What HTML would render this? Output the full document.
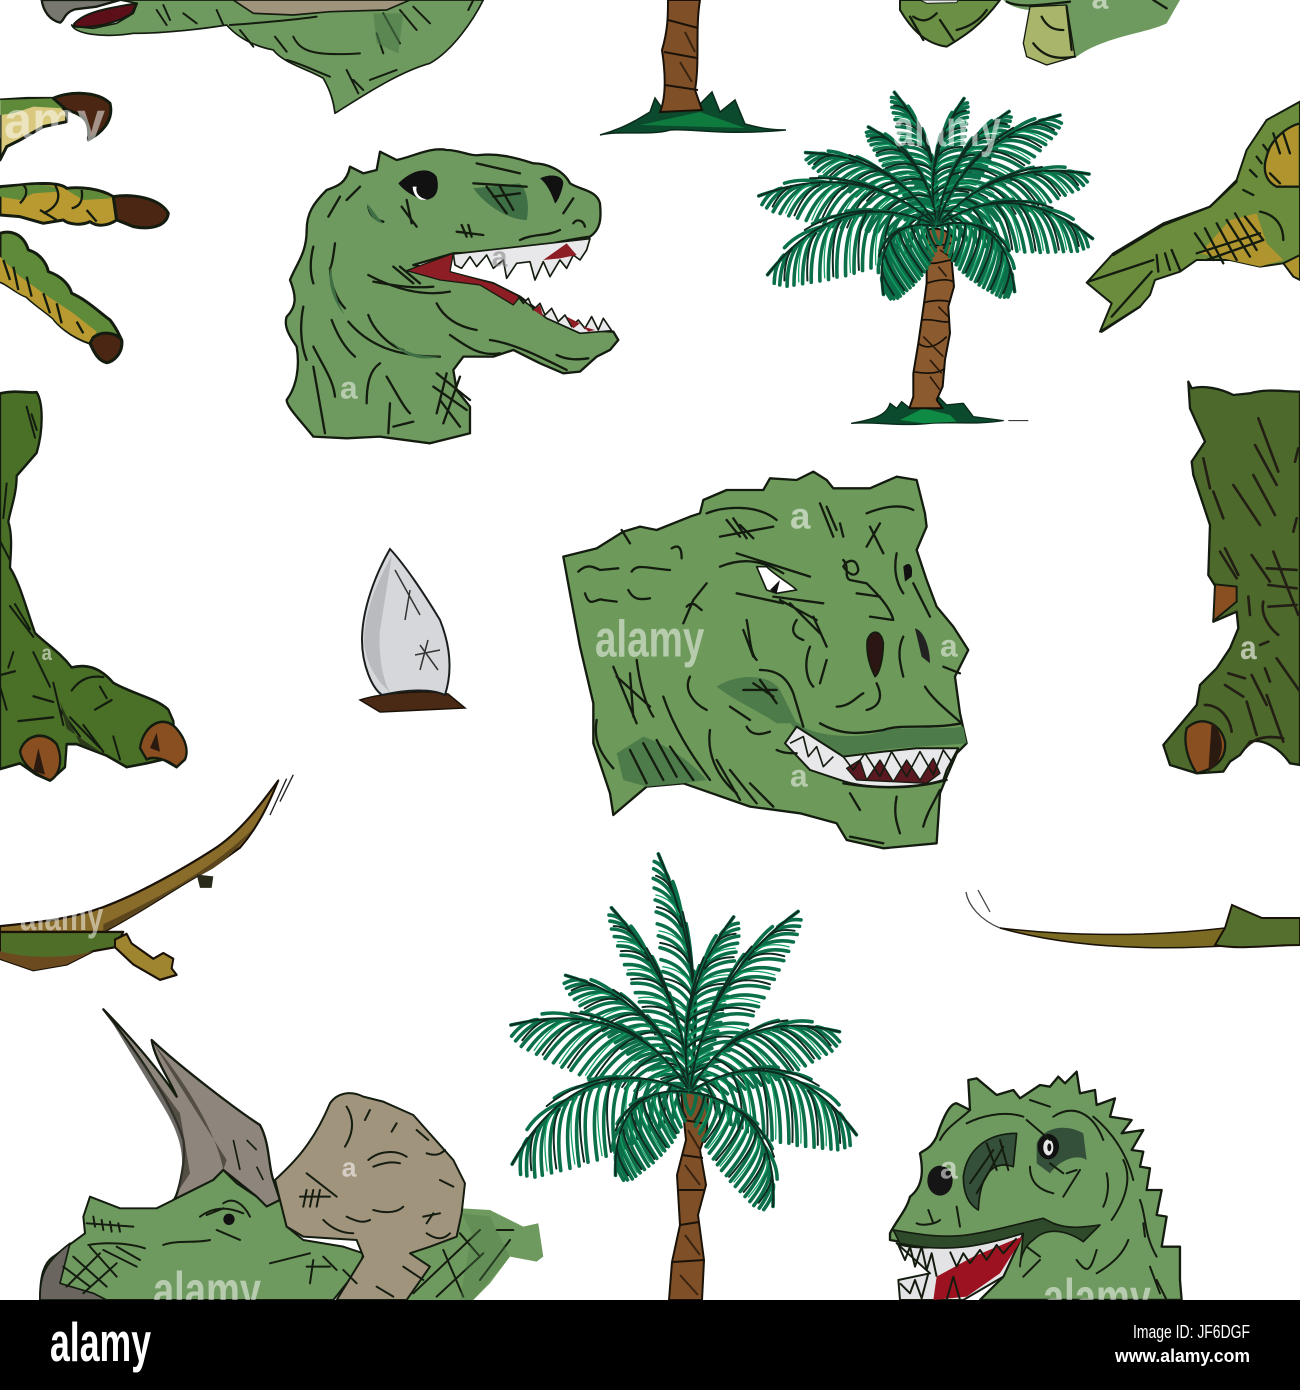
<!DOCTYPE html>
<html><head><meta charset="utf-8"><title>Dinosaur pattern</title>
<style>html,body{margin:0;padding:0;background:#fff}svg{display:block}</style></head>
<body>
<svg xmlns="http://www.w3.org/2000/svg" width="1300" height="1390" viewBox="0 0 1300 1390" font-family="'Liberation Sans',sans-serif">
<defs>
<g id="f" fill="none" stroke-linecap="round">
<path vector-effect="non-scaling-stroke" stroke="#0b7049" stroke-width="3.6" d="M0 0C30-28 65-28 100 18M4-3Q10 5 12 14M9-7Q17 3 20 18M14-10Q23 2 26 20M19-13Q28 0 31 22M24-15Q33-2 36 24M29-17Q38-4 41 26M34-18Q43-5 46 27M39-19Q48-6 51 28M44-19Q53-7 56 29M49-19Q58-7 61 29M54-17Q63-5 66 30M59-15Q68-4 71 30M64-13Q73-2 76 30M69-10Q78 0 81 30M74-8Q83 2 86 30M79-4Q87 5 90 30M84 0Q91 7 94 28M89 4Q95 10 97 26M20-14Q35-24 50-24M40-19Q58-24 70-18M60-15Q78-14 88-2"/>
<path vector-effect="non-scaling-stroke" stroke="#0f2a20" stroke-width="2" d="M0 0C30-30 65-30 100 18M9-7Q15 3 17 16M24-15Q31-2 33 22M39-19Q46-6 48 26M54-17Q61-5 63 28M69-10Q76 0 78 28M84 0Q89 7 91 25M35-21Q55-26 75-14"/>
<path vector-effect="non-scaling-stroke" stroke="#12a064" stroke-width="1.3" d="M14-10Q21 2 24 18M29-17Q36-4 38 24M44-19Q51-7 53 27M59-15Q66-4 68 28M74-8Q81 2 83 28"/>
</g>
<g id="wm"><text font-size="52" font-weight="700" fill="#fff" opacity=".5" textLength="108" lengthAdjust="spacingAndGlyphs">alamy</text></g>
</defs>
<rect width="1300" height="1390" fill="#fff"/>

<!-- top-left dino, claws -->
<g transform="scale(.3333)" stroke-linejoin="round">
<path d="M125 0C130 35 150 60 180 68C195 60 190 40 225 28L290 20L360 0Z" fill="#77766f" stroke="#141c10" stroke-width="7"/>
<path d="M360 0L412 10L400 40L350 70L280 85L225 80L215 75C225 100 300 115 400 100C500 100 620 85 680 75C720 120 770 140 820 150C850 190 930 210 970 235C990 270 1000 300 1005 340C1100 280 1200 215 1290 190C1360 150 1420 60 1450 0Z" fill="#6f9a5f" stroke="#141c10" stroke-width="5"/>
<path d="M222 72C250 40 300 28 410 10L395 40C350 70 280 85 225 80Z" fill="#5c0f18" stroke="#141c10" stroke-width="6"/>
<path d="M700 0L760 40L880 45L990 35L1160 30L1230 0Z" fill="#a0947d" stroke="#141c10" stroke-width="5"/>
<g fill="none" stroke="#141c10" stroke-width="6" stroke-linecap="round">
<path d="M470 30L500 75M490 15L510 60M550 40L590 70M650 30L670 75M690 75C760 70 880 60 950 50M720 90L760 140M825 110L860 155M880 110C900 150 930 170 1080 160M860 180C900 190 940 210 990 230M1040 210L1075 280M1060 240L1090 270M1130 100L1150 160M1200 30L1250 90M1240 20L1290 70M1150 40L1200 130M1110 240L1190 210M1420 0L1405 30"/>
</g>
<path d="M1120 40L1210 40L1195 160L1130 130Z" fill="#4d7c4a" opacity=".6"/>
<!-- finger 1 -->
<path d="M0 300L80 295L160 295L200 335L200 365L130 380L60 420L20 440L0 480Z" fill="#d8c97e" stroke="#141c10" stroke-width="9"/>
<path d="M0 300L160 295L190 325L100 320L40 340L0 345Z" fill="#5f8a3a"/>
<path d="M160 295C200 275 290 270 330 310C340 350 320 390 265 420C270 370 260 345 200 330Z" fill="#4a2613" stroke="#141c10" stroke-width="9"/>
<!-- finger 2 -->
<path d="M0 560L60 555C100 550 180 545 200 565C240 560 300 565 340 590L350 660C320 680 290 680 270 665C240 680 200 670 190 660L130 670L60 650L0 645Z" fill="#b89a30" stroke="#141c10" stroke-width="9"/>
<path d="M0 565L60 558C100 553 170 550 175 575L100 580L60 600L0 590ZM200 570C240 565 300 570 335 595L250 600Z" fill="#5f8a3a"/>
<path d="M340 590C400 580 480 595 505 640C500 680 450 690 400 680L350 660Z" fill="#4a2613" stroke="#141c10" stroke-width="9"/>
<path d="M70 555C85 570 80 590 60 610M165 555C185 590 175 620 130 640M245 570C250 600 240 620 215 625M120 630L170 660M260 630L290 665" fill="none" stroke="#141c10" stroke-width="7"/>
<!-- finger 3 -->
<path d="M0 700C30 690 70 700 85 750C120 760 140 790 145 815C190 830 210 860 215 880C260 900 290 930 330 960C350 985 355 1000 365 1020C370 1060 340 1085 320 1088C290 1080 280 1050 270 1030C210 1010 170 970 160 955C130 930 100 910 80 890C50 880 20 850 0 845Z" fill="#5f8a3a" stroke="#141c10" stroke-width="9"/>
<path d="M0 770L60 830L130 880L220 940L290 995L275 1030C210 1010 170 970 160 955C130 930 100 910 80 890C50 880 20 850 0 845Z" fill="#b89a30"/>
<path d="M10 780L30 840M40 800L55 870M80 830L95 890M130 880L150 940M170 910L185 970M230 965L250 1000" stroke="#141c10" stroke-width="7"/>
<path d="M280 1012C310 990 350 1000 365 1020C370 1060 340 1085 320 1088C290 1080 280 1050 270 1030Z" fill="#4a2613" stroke="#141c10" stroke-width="9"/>
</g>
<text x="-38" y="138" font-size="52" font-weight="700" fill="#fff" opacity=".5" textLength="143" lengthAdjust="spacingAndGlyphs">alamy</text>

<!-- left foot + pterosaur -->
<g transform="translate(0 380) scale(.3333 .3833)" stroke-linejoin="round">
<path d="M0 35C50 25 80 35 110 32C130 60 130 130 110 190L50 250C50 300 30 340 25 370C40 410 30 470 30 490C60 530 80 600 105 660C140 690 180 710 215 750C260 740 300 750 340 790C400 820 470 830 505 860L520 890L530 1010L490 990L440 1000L380 1010L320 980L230 950L200 950L195 1010L150 1045L110 1030L60 1000L0 1015Z" fill="#4a7028" stroke="#141c10" stroke-width="7"/>
<path d="M60 970C70 930 130 910 170 950C190 990 180 1030 150 1045C110 1030 70 1010 60 970Z" fill="#8a4f20" stroke="#141c10" stroke-width="7"/>
<path d="M100 1020L115 960L135 1030Z" fill="#2b1a10"/>
<path d="M420 960C430 900 490 870 530 910C560 940 565 970 555 990L530 1010C500 990 460 980 440 990Z" fill="#8a4f20" stroke="#141c10" stroke-width="7"/>
<path d="M450 960L470 920L480 970Z" fill="#2b1a10"/>
<g fill="none" stroke="#141c10" stroke-width="6" stroke-linecap="round">
<path d="M80 70L105 150M95 90L110 130M20 270L10 360M0 420L30 470M30 590L100 670M45 585L90 650M100 710L150 800M100 825L160 840M160 790L190 900M180 860L240 930M210 880L300 960M250 900L310 970M340 930L360 990M215 810C240 780 270 770 310 775M285 860L335 835M300 800L320 830M55 890L160 880M0 770L45 760M40 710L25 750M0 800L20 860"/>
</g>
<path d="M180 840L200 910L310 975L240 950Z" fill="#2a3a1a"/>
<text x="125" y="730" font-size="55" font-weight="700" fill="#fff" opacity=".55">a</text>
<!-- pterosaur -->
<path d="M0 1425C100 1415 200 1410 310 1375C420 1340 560 1270 640 1225C720 1180 780 1110 835 1045C800 1120 770 1170 720 1220L640 1270L590 1295C500 1340 420 1390 310 1440L0 1445Z" fill="#8a6c2a" stroke="#1a1208" stroke-width="6"/>
<path d="M310 1420C450 1360 620 1290 760 1170C700 1240 640 1280 590 1295C500 1340 420 1390 310 1440Z" fill="#5b451c"/>
<path d="M590 1290L640 1295L635 1325L600 1325Z" fill="#2a2a1a"/>
<path d="M0 1440L250 1440L370 1440L345 1480L280 1490L200 1525L100 1540L0 1510Z" fill="#4f6f28" stroke="#1a1208" stroke-width="6"/>
<path d="M0 1490C80 1510 200 1510 280 1490L200 1525L100 1540L0 1510Z" fill="#6b4a20"/>
<path d="M345 1460L380 1445L395 1470L460 1510L490 1495L520 1510L515 1535L530 1552L480 1565L400 1525L345 1480Z" fill="#a08530" stroke="#1a1208" stroke-width="6"/>
<path d="M810 1135L860 1040M840 1100L880 1030" stroke="#222" stroke-width="4" fill="none"/>
<text x="60" y="1435" font-size="105" font-weight="700" fill="#fff" opacity=".5" textLength="250" lengthAdjust="spacingAndGlyphs">alamy</text>
</g>

<!-- right foot -->
<g transform="translate(1150 375) scale(.3333)" stroke-linejoin="round">
<path d="M115 20L125 40C160 30 210 40 250 60L300 55C350 40 400 50 450 50V1170L420 1165C390 1120 340 1090 300 1100L270 1140L240 1160L220 1190L140 1195L60 1170L40 1110L140 990L150 930L200 880L240 820L265 760L260 710L190 740L200 640L175 600L180 450L130 300L125 260L165 200L120 100Z" fill="#4d6a2c" stroke="#141c10" stroke-width="7"/>
<path d="M195 628L260 635L260 680L190 738Z" fill="#8a4f20" stroke="#141c10" stroke-width="6"/>
<path d="M110 1060C150 1020 210 1040 225 1100C230 1150 200 1180 140 1195C110 1150 100 1100 110 1060Z" fill="#8a4f20" stroke="#141c10" stroke-width="7"/>
<path d="M185 1040C225 1080 230 1150 175 1190Z" fill="#2b1a10"/>
<g fill="none" stroke="#231f14" stroke-width="8" stroke-linecap="round">
<path d="M325 130L385 290M315 210L380 330M310 300L375 420M250 330L330 450M160 250L180 340M190 350L220 430M210 530L260 610M225 520L265 600M305 540L360 620M370 530L445 720M340 680C330 720 360 760 385 780M350 580L440 585M355 630L440 640M355 695L440 690M295 665L300 720M330 810L355 800M380 850L450 950M305 900L350 990M290 980L320 1080M350 960L400 1100M235 895L285 910M225 930L280 965M345 880L360 920M165 990C210 990 240 1030 245 1070M285 1120C310 1090 350 1080 400 1090M445 220L435 260M440 430L430 470"/>
</g>
<text x="270" y="852" font-size="100" font-weight="700" fill="#fff" opacity=".6" textLength="50" lengthAdjust="spacingAndGlyphs">a</text>
</g>

<!-- right top olive dino -->
<g transform="translate(1080 90) scale(.3333)" stroke-linejoin="round">
<path d="M20 578L100 490L250 400L390 350L470 270L500 180L560 90L660 35V530L610 520L540 530L450 510L350 510L300 545L225 570L210 615L180 650L60 725L95 640Z" fill="#6a8c3c" stroke="#141c10" stroke-width="6"/>
<path d="M560 200C570 150 620 110 660 100V290L590 290C550 270 550 230 560 200Z" fill="#b0952f" stroke="#141c10" stroke-width="7"/>
<path d="M360 490L450 390L530 370L560 460L610 510L540 530L450 510Z" fill="#b0952f"/>
<path d="M610 520L660 495V570L640 560Z" fill="#b0952f" stroke="#141c10" stroke-width="6"/>
<g fill="none" stroke="#141c10" stroke-width="7" stroke-linecap="round">
<path d="M100 495L250 405L390 350L470 275M25 575L220 510M95 680L215 545M65 725L180 650M345 430L400 510M375 415L430 520M410 400L470 510M440 390L510 500M465 370L530 480M495 380L550 450M350 490L540 430M380 510L550 450M230 495L235 545M255 490L270 540M275 480L300 540M540 365C590 375 610 410 610 450M510 240L530 260M530 200L545 220M550 165L565 185M490 300L520 315M580 130L600 190M610 130L630 190M570 250L600 280"/>
</g>
</g>

<!-- top-right partial -->
<g transform="translate(890 0) scale(.3333)" stroke-linejoin="round">
<path d="M30 0L30 30C60 80 100 130 170 140C220 110 270 80 330 0Z" fill="#6a8f45" stroke="#141c10" stroke-width="6"/>
<path d="M90 0L110 10L200 8L205 0Z" fill="#e8e8e8" stroke="#141c10" stroke-width="3"/>
<path d="M340 0C360 20 400 30 420 30L400 130L410 170L470 195L560 170C640 110 770 100 830 70L870 0Z" fill="#6f9a5f"/>
<path d="M420 20L530 15L555 170L470 195L410 170L400 130Z" fill="#a9b56b" stroke="#141c10" stroke-width="4"/>
<g fill="none" stroke="#141c10" stroke-width="7" stroke-linecap="round">
<path d="M70 50C100 70 120 60 140 40M60 50L100 120M150 60L190 120M200 90C240 80 270 60 290 30M455 50C470 80 490 90 520 90M430 130C460 170 500 180 555 170M530 20L545 150M350 5C390 25 450 15 540 5M790 0L830 25"/>
</g>
<text x="605" y="25" font-size="90" font-weight="700" fill="#fff" opacity=".55">a</text>
</g>

<!-- top palm -->
<path d="M600 135C625 128 640 118 650 112L655 98L662 108L700 104L712 92L720 112L735 100L745 124C760 128 770 130 786 130C720 136 690 128 670 130C650 136 620 130 600 135Z" fill="#0b4a2c" stroke="#0b2a1b" stroke-width="1.5"/>
<path d="M640 125L700 112L745 128Z" fill="#0e7a3e"/>
<path d="M668 0H700C695 30 700 60 695 90L702 110L660 112C667 95 665 70 662 50C668 30 668 15 668 0Z" fill="#7f5028" stroke="#1a1208" stroke-width="2"/>
<path d="M668 20L698 28M664 52L697 58M665 85L698 90" stroke="#1a1208" stroke-width="2"/>
<path d="M685 32L695 52M680 62L692 82" stroke="#3a2410" stroke-width="2"/>

<!-- palm 1 -->
<g transform="translate(750 80) scale(.3333)" stroke-linejoin="round">
<path d="M305 1030C360 1020 410 1010 420 970L440 985L455 965L480 985L560 945L590 975L640 970L670 1010L760 1022C680 1035 600 1025 540 1030C450 1040 380 1025 305 1030Z" fill="#0b4a2c" stroke="#0b2a1b" stroke-width="4"/>
<path d="M775 1022H835" stroke="#222" stroke-width="3"/>
<path d="M450 1020L520 985L600 1005L620 1025L520 1030Z" fill="#0e8a45"/>
<path d="M530 450C560 440 600 450 612 480L605 540L612 620L595 680L600 760L585 840L578 920L560 960L578 985L478 985L490 950L490 880L505 790L515 720L522 670L530 610L530 550Z" fill="#8b5a2f" stroke="#141008" stroke-width="6"/>
<path d="M535 495C570 500 600 490 612 488M530 548C560 555 590 540 605 540M530 610C560 600 590 595 610 605M522 668C550 660 580 660 597 665M515 720C550 715 575 730 600 725M505 790C530 810 560 800 590 770M490 875C520 880 560 885 585 865" fill="none" stroke="#141008" stroke-width="5"/>
<path d="M570 510L600 530M565 560L590 590M565 680L595 710M520 770L560 810M540 790L580 830M540 840L575 880M540 890L570 930" fill="none" stroke="#2a1a0c" stroke-width="5"/>
</g>
<g transform="translate(937 226)">
<use href="#f" transform="rotate(76) scale(-1.4 .5)"/>
<use href="#f" transform="rotate(-82) scale(1.3 .5)"/>
<use href="#f" transform="rotate(60) scale(-1.2 .55)"/>
<use href="#f" transform="rotate(-62) scale(1.35 .55)"/>
<use href="#f" transform="rotate(34) scale(-1.5 .7)"/>
<use href="#f" transform="rotate(15) scale(-1.8 .95)"/>
<use href="#f" transform="rotate(-9) scale(-1.75 1.2)"/>
<use href="#f" transform="rotate(-40) scale(-.85 1)"/>
<use href="#f" transform="rotate(-47) scale(1.65 .8)"/>
<use href="#f" transform="rotate(-24) scale(1.6 .8)"/>
<use href="#f" transform="rotate(-2) scale(1.55 1)"/>
<use href="#f" transform="rotate(30) scale(1 1)"/>
</g>
<text x="893" y="146" font-size="52" font-weight="700" fill="#fff" opacity=".55" textLength="108" lengthAdjust="spacingAndGlyphs">alamy</text>

<!-- palm 2 -->
<path d="M681 1092L708 1095L707 1130L700 1150L706 1185L698 1215L704 1260L702 1300H669L672 1262L680 1225L677 1175L686 1140Z" fill="#7f5028" stroke="#1a1208" stroke-width="2"/>
<path d="M684 1120L707 1124M682 1155L703 1158M678 1190L705 1190M680 1225L699 1222M673 1262L704 1260" stroke="#1a1208" stroke-width="2"/>
<path d="M688 1130L700 1150M685 1165L700 1185M685 1235L700 1255M680 1275L698 1295" stroke="#3a2410" stroke-width="2"/>
<g transform="translate(690 1092)">
<use href="#f" transform="rotate(85) scale(-2.4 .6)"/>
<use href="#f" transform="rotate(70) scale(-2 .6)"/>
<use href="#f" transform="rotate(-80) scale(1.8 .7)"/>
<use href="#f" transform="rotate(48) scale(-1.7 .8)"/>
<use href="#f" transform="rotate(27) scale(-1.9 1.2)"/>
<use href="#f" transform="rotate(-14) scale(-1.9 1.5)"/>
<use href="#f" transform="rotate(-38) scale(-1.1 1.1)"/>
<use href="#f" transform="rotate(-63) scale(2.1 .8)"/>
<use href="#f" transform="rotate(-29) scale(1.6 1.1)"/>
<use href="#f" transform="rotate(6) scale(1.7 1.4)"/>
<use href="#f" transform="rotate(46) scale(1.4 1.1)"/>
</g>

<!-- rex 1 -->
<g transform="translate(280 140) scale(.3333)" stroke-linejoin="round">
<path d="M100 890C60 840 20 800 20 780C50 740 60 680 50 620C30 590 10 560 20 530C50 500 50 470 30 420C50 370 80 340 80 270C80 220 100 190 140 150C170 140 200 130 210 80L250 100L290 90L300 35L350 60C400 50 450 20 500 30C540 30 570 50 600 45C650 40 700 50 760 70C800 70 850 90 870 130C900 150 950 150 960 190C965 240 960 270 930 290C850 300 780 320 700 335L520 340L400 375L520 400L640 430L720 470L800 530L900 570L1000 575L1015 600L990 630L950 650L900 695L850 700L780 670L700 630L640 650L550 650L520 690L530 750L570 800L570 880L530 890L450 910L300 890L200 895Z" fill="#6f9a5f" stroke="#141c10" stroke-width="7"/>
<path d="M380 392L520 340L510 395L640 430L720 470L700 495L600 435L480 420Z" fill="#8e1e26" stroke="#141c10" stroke-width="4"/>
<path d="M520 342L930 296L920 330L900 360L880 345L860 385L840 360L810 410L790 365L765 420L750 365L710 370L680 415L670 360L640 385L620 345L590 380L570 350L545 385L525 375Z" fill="#e8e8ea" stroke="#141c10" stroke-width="5"/>
<path d="M790 360L860 310L890 345L840 355Z" fill="#8e1e26"/>
<path d="M715 470L730 490L745 475L760 510L780 490L795 525L815 505L835 545L855 525L875 560L895 540L915 565L935 530L955 570L970 535L995 572L900 580L800 535Z" fill="#e8e8ea" stroke="#141c10" stroke-width="5"/>
<path d="M760 510L790 530L780 495ZM860 530L880 565L900 550ZM910 560L925 575L945 570Z" fill="#8e1e26"/>
<path d="M355 130C400 85 450 80 470 110C480 150 470 180 430 180C400 170 370 150 355 130Z" fill="#111"/>
<path d="M398 140C400 170 420 185 440 178C420 175 405 160 410 140Z" fill="#fff"/>
<path d="M580 145L720 130C750 160 745 220 740 240C690 240 620 200 580 145Z" fill="#3f6f45"/>
<path d="M780 115C810 100 850 105 850 130C845 160 830 190 825 190C815 160 800 130 780 115Z" fill="#111"/>
<g fill="none" stroke="#141c10" stroke-width="7" stroke-linecap="round">
<path d="M590 70L720 100M580 130L740 140M620 140L680 220M660 140L700 210M640 170L720 160"/>
<path d="M265 405C350 450 430 470 510 455M280 425C360 440 400 445 460 440"/>
<path d="M470 490C490 530 530 560 590 570M510 585C560 620 600 650 660 640M630 600C700 610 780 650 860 690"/>
<path d="M830 645C860 660 890 660 925 655M205 545C260 610 340 650 480 650M265 525C280 570 330 620 370 630"/>
<path d="M150 385C150 430 170 480 195 505M155 540C170 580 190 620 225 650"/>
<path d="M100 620C130 680 160 720 165 770M100 680L135 880M70 500C60 550 60 610 80 660"/>
<path d="M470 700L570 780M460 740L560 810M480 780L540 860M500 700L470 820M540 710L490 850"/>
<path d="M320 710C350 760 370 800 390 820M340 860L400 845M330 790L325 880"/>
<path d="M260 790C260 730 270 690 300 670M265 200C270 230 290 240 310 245M365 200L410 260M380 180L395 250"/>
<path d="M545 255L560 290M565 255L575 290M530 275L610 285M180 170L145 230M240 140L200 180"/>
<path d="M880 250C890 235 910 240 915 260M850 220L880 175M720 300C760 280 800 290 840 270"/>
<path d="M100 320C90 360 90 400 100 430M165 310C160 350 155 380 150 385M340 380L400 430M360 380L420 430"/>
</g>
<path d="M150 380C140 440 170 500 195 525C170 490 160 430 150 380ZM330 600C370 640 430 650 480 650C420 665 370 650 330 600ZM260 190C270 240 300 250 310 250C290 230 280 210 260 190Z" fill="#3f6f45"/>
<text x="180" y="775" font-size="95" font-weight="700" fill="#fff" opacity=".5">a</text>
<text x="635" y="380" font-size="85" font-weight="700" fill="#888" opacity=".6">a</text>
</g>

<!-- rex 2 -->
<g transform="translate(550 460) scale(.3333)" stroke-linejoin="round">
<path d="M40 290L140 265L220 215L270 200L320 210L420 170L450 160L460 120L530 90L640 90L660 55L740 60L790 35L830 60L850 85L960 85L1040 50L1100 60L1125 160L1130 200L1100 270L1130 360L1160 440L1210 500L1255 570L1215 650L1230 760L1250 850L1220 880L1190 950L1170 1000L1160 1150L1000 1165L890 1140L860 1090L750 1060L600 1040L400 970L290 980L190 1065L180 1000L130 850L130 730L90 560L60 400Z" fill="#6d9a5a" stroke="#141c10" stroke-width="7"/>
<path d="M200 880L280 830C340 850 420 900 470 960L400 970L290 980L220 960ZM760 800C800 830 950 840 1000 810C1080 800 1180 810 1240 800L1250 850C1150 860 1000 860 880 890L780 870L700 760Z" fill="#4d7c4a"/>
<path d="M500 680C560 640 660 640 690 690L740 790L680 790C620 750 550 720 500 680Z" fill="#4d7c4a"/>
<path d="M705 850L740 800L880 890L1000 875L1100 865L1225 865L1190 930L1180 960C1100 985 950 990 870 960L780 930Z" fill="#e8e8ea" stroke="#141c10" stroke-width="6"/>
<path d="M890 925L930 900L950 960L990 900L1030 965L1070 900L1110 960L1150 895L1170 940L1130 970L920 960Z" fill="#5a1820" stroke="#141c10" stroke-width="4"/>
<path d="M720 850L760 830L775 890L800 860L820 920L850 890M880 890L910 930L945 880L990 950L1025 875L1070 950L1110 875L1150 945L1180 870L1205 905" fill="none" stroke="#141c10" stroke-width="5"/>
<path d="M620 320L650 320C680 350 720 370 740 390L680 400L650 390Z" fill="#fff" stroke="#141c10" stroke-width="5"/>
<path d="M660 390L690 360L680 400Z" fill="#111"/>
<path d="M952 540C965 505 995 510 1000 550C1000 590 990 640 975 650C960 620 948 580 952 540Z" fill="#2b1614" stroke="#141c10" stroke-width="5"/>
<path d="M1095 505C1120 510 1140 560 1140 610L1115 590Z" fill="#222"/>
<path d="M1060 320C1080 300 1090 320 1085 350L1065 365Z" fill="#111"/>
<g fill="none" stroke="#141c10" stroke-width="7" stroke-linecap="round">
<path d="M85 335C110 310 130 320 150 330L205 325M245 335C260 310 290 325 360 330M105 400C120 450 140 410 160 420L200 425M235 390C250 420 270 420 300 415"/>
<path d="M215 210L240 250M365 265C390 250 395 270 395 295"/>
<path d="M470 160C520 140 620 130 680 180M530 180L570 230M550 175L590 235M570 195L610 235M510 230L670 200"/>
<path d="M810 130L850 230M830 140L860 210M870 190L880 230M950 160C1000 140 1050 130 1090 150M960 200L1000 280M990 190L950 260"/>
<path d="M510 320C560 300 620 290 700 340M560 280L780 350M560 400L700 430M670 410L820 430"/>
<path d="M690 420L800 480M720 430L810 520M740 480C720 510 730 530 760 540M790 470L830 560M780 560C760 610 770 660 790 680M830 600L810 670"/>
<path d="M880 300C900 320 880 350 900 360L950 370C980 400 1020 440 1030 480L960 470"/>
<path d="M590 480C600 530 600 580 620 600M580 510L610 590"/>
<path d="M420 650C400 690 430 730 470 750M410 440C430 420 440 440 455 450M400 490L430 420L470 370"/>
<path d="M190 620L260 790M200 650L300 740M260 600C270 680 290 740 310 770M240 640L250 770"/>
<path d="M340 710C370 800 420 880 480 960M480 810C470 880 500 950 560 1000M140 780C130 840 150 880 190 925"/>
<path d="M240 870L290 970M280 850L340 960M320 840L380 950M360 860L430 960M500 900L570 1020M540 930L620 1030M600 970L670 1040"/>
<path d="M630 630C680 630 710 650 730 700L760 800M590 800C600 820 620 830 660 815M680 870C700 880 720 880 740 880"/>
<path d="M860 740C900 740 920 710 940 700M950 750C990 740 1000 710 980 670M810 790C880 830 940 820 1000 810C1060 790 1130 810 1235 790"/>
<path d="M1125 680C1150 720 1190 750 1235 790M1180 620L1230 640M1060 530C1040 570 1050 610 1060 650"/>
<path d="M900 1000L930 1050M1040 1010C1030 1060 1040 1090 1050 1120M1170 990C1150 1030 1130 1060 1120 1100M900 1130L1000 1150M880 970C1000 990 1100 985 1190 960"/>
<path d="M1040 280C1030 330 1040 370 1060 400M1090 370L1140 470M880 320C890 300 920 290 925 330C920 350 900 350 880 320M920 400L990 410"/>
<path d="M610 670L670 710M630 660L680 730M580 690L680 690M540 740L600 780"/>
</g>
<text x="135" y="590" font-size="156" font-weight="700" fill="#fff" opacity=".5" textLength="328" lengthAdjust="spacingAndGlyphs">alamy</text>
<text x="720" y="205" font-size="110" font-weight="700" fill="#fff" opacity=".55">a</text>
<text x="1170" y="590" font-size="95" font-weight="700" fill="#fff" opacity=".5">a</text>
<text x="720" y="980" font-size="95" font-weight="700" fill="#fff" opacity=".5">a</text>
</g>

<!-- tooth -->
<path d="M360 700C385 692 430 690 448 694L465 708L380 712Z" fill="#4a2a14" stroke="#1a1208" stroke-width="1.5"/>
<path d="M390 549C375 575 362 610 362 640C362 665 372 688 382 695C405 690 430 688 445 695C453 670 450 645 440 620C425 595 405 565 390 549Z" fill="#d5d7da" stroke="#1a1e1e" stroke-width="2"/>
<path d="M392 555L380 630C378 650 382 680 390 692C375 680 365 660 364 640C365 610 378 580 392 555Z" fill="#b9bbbe"/>
<path d="M395 570L420 615M410 590L405 620M420 645L438 670M428 640L420 670M415 655L440 650" stroke="#333" stroke-width="1.5" fill="none"/>

<!-- pterosaur right -->
<path d="M1000 928C1060 935 1140 938 1225 928L1240 945C1140 952 1060 945 1000 928Z" fill="#7a6a22" stroke="#1a1208" stroke-width="1.5"/>
<path d="M1225 928L1232 905L1248 912L1262 918L1300 918V945C1270 945 1240 950 1215 945Z" fill="#55702e" stroke="#1a1208" stroke-width="2"/>
<path d="M966 892C968 905 980 920 1000 928M978 890L990 912" stroke="#444" stroke-width="1.3" fill="none"/>

<!-- triceratops -->
<g transform="translate(30 1000) scale(.3333)" stroke-linejoin="round">
<path d="M220 28C300 130 420 290 460 420C470 490 440 600 430 600L550 540L580 510L680 590L710 620L750 600L730 540C715 500 720 430 690 375C620 330 450 200 365 120C375 180 420 240 440 290C380 200 300 110 220 28Z" fill="#8e867c" stroke="#141c10" stroke-width="7"/>
<path d="M370 130L590 480L580 510C560 400 470 250 370 130ZM230 40L450 340L480 520L440 580C470 490 460 420 400 320Z" fill="#3d3933" opacity=".75"/>
<path d="M650 420L680 450M610 420L630 510M680 500L700 540" stroke="#141c10" stroke-width="5" fill="none"/>
<path d="M1295 625L1380 630L1480 680L1525 670L1540 770L1520 785L1440 770L1380 850L1330 900H1000L1000 700Z" fill="#6f9a5f"/>
<path d="M160 650L180 590L270 625L380 625L430 600L550 540L580 510L620 550L680 590L710 620L750 600L770 680L820 720L940 740L1000 760L990 800L910 900H30C30 830 40 790 70 770L165 700Z" fill="#6f9a5f" stroke="#141c10" stroke-width="6"/>
<path d="M30 900C30 830 40 790 120 730L90 850L190 880L230 900Z" fill="#6a665f" stroke="#141c10" stroke-width="5"/>
<path d="M735 540C790 490 850 430 900 310C920 280 960 270 1000 290L1060 305L1150 345L1190 390L1270 480L1305 550L1295 640L1280 710L1200 740L1140 760L1200 800L1130 900H920L1000 770L980 720L820 710L770 680L750 600Z" fill="#a0947d" stroke="#141c10" stroke-width="6"/>
<g fill="none" stroke="#141c10" stroke-width="6" stroke-linecap="round">
<path d="M950 320C975 360 970 400 945 440M1020 330L1005 360M1100 370L1085 395M1160 390L1195 420M1015 480C1050 450 1100 450 1130 470M1030 500C1070 485 1090 485 1110 490M1190 460C1220 470 1235 460 1245 450M1230 540L1270 560M830 520L920 590M810 590L900 590M830 570L820 620M850 570L840 620M870 570L860 620M1030 630C1060 640 1100 640 1120 620M950 650C980 665 1000 670 1020 660M880 660C910 690 940 700 970 700M1180 650L1230 640M1190 670L1210 640M1190 700C1220 720 1240 720 1260 700M1120 800L1180 840M1040 860L1090 890"/>
<path d="M190 650L195 680M215 660L220 690M240 665L245 695M265 670L270 695M170 670L310 680M175 735C230 725 300 730 345 745M400 735C440 720 500 730 540 720M530 645L580 625M580 610C610 590 640 610 660 650M510 650C550 620 590 620 640 640M560 690L630 720M720 790C760 780 800 770 840 760"/>
<path d="M100 800L180 860M130 770L230 860M180 740L260 830M220 750L320 800M260 740L330 780M110 860L210 760M160 880L260 790M830 800L900 800M850 780L840 850M880 770L920 810M940 810L980 850M1150 880L1350 690M1220 890L1360 760M1240 750L1300 890M1290 700L1350 770M1400 690L1450 690M1350 840L1440 720"/>
</g>
<circle cx="597" cy="658" r="17" fill="#111"/>
<path d="M1295 640L1325 700L1290 900H1330L1440 770L1380 650Z" fill="#4d7c4a" opacity=".35"/>
<text x="935" y="530" font-size="80" font-weight="700" fill="#fff" opacity=".55">a</text>
</g>
<use href="#wm" x="153" y="1308"/>

<!-- rex 3 -->
<g transform="translate(880 1060) scale(.3333)" stroke-linejoin="round">
<path d="M30 520C50 480 80 450 90 410C130 380 130 330 120 280C130 270 150 270 170 230C190 170 210 130 230 130L270 150L265 60L290 55L350 105L400 90L420 115L480 75L510 80L535 50L555 70L590 35L600 100L645 90L650 135L705 115L690 170L755 180L725 220L790 210L755 270L790 275L780 320L810 325L800 390L845 390L830 465L860 470L845 560L900 560L900 660L905 720H300L370 650L430 520L200 570L30 540Z" fill="#6f9a5f" stroke="#141c10" stroke-width="7"/>
<path d="M50 550C100 570 200 570 430 520L370 650L250 720H60L55 660L150 640Z" fill="#e3e3e5" stroke="#141c10" stroke-width="6"/>
<path d="M400 540L430 530L360 640L260 710L160 720L170 650L280 590Z" fill="#9c1220"/>
<path d="M55 555L75 600L90 560L105 620L125 560L140 630L155 580L170 650M210 575L230 620L250 580L270 610L300 570L320 600L350 555L370 580L410 535M60 670L90 700L105 660L125 715L145 640M200 720L220 650L240 720" fill="none" stroke="#141c10" stroke-width="6"/>
<path d="M40 510C100 520 200 540 290 520C350 510 420 490 490 475L520 490C570 510 620 500 660 495L610 545C560 510 500 500 460 540C430 560 420 600 420 620L430 520C300 560 200 580 60 550Z" fill="#2f4a2a" stroke="#141c10" stroke-width="5"/>
<path d="M250 350C260 270 320 220 410 220L400 320C340 300 300 340 295 450C260 430 250 390 250 350Z" fill="#35503a" stroke="#141c10" stroke-width="5"/>
<path d="M470 250C490 200 560 190 610 220L620 300C590 280 540 300 510 340L470 310Z" fill="#35503a"/>
<ellipse cx="505" cy="260" rx="32" ry="38" fill="#111"/><ellipse cx="505" cy="262" rx="15" ry="24" fill="#e6e6e6"/><ellipse cx="508" cy="262" rx="6" ry="12" fill="#111"/>
<ellipse cx="180" cy="362" rx="38" ry="45" fill="#151515"/>
<g fill="none" stroke="#141c10" stroke-width="6" stroke-linecap="round">
<path d="M270 370L340 270M290 400L370 260M320 250L350 330M360 240L385 330M180 240C200 200 240 180 270 150M260 190C300 170 370 150 430 170M450 120L510 140M440 180L510 240M520 170C580 130 640 160 670 240M640 170C700 220 740 280 760 360M560 340L590 330M600 330L550 410M450 320C450 370 480 390 520 400M510 310L550 340M680 340C690 380 680 420 670 440M730 300C750 340 750 400 695 480M110 490C130 500 170 490 180 480M145 450L160 490M230 440L240 500M780 420C800 470 790 520 830 590M790 490L795 530M440 560L480 590M430 650L480 600M590 600C620 640 630 640 650 570M650 640C700 610 730 580 745 540M810 620L840 700M830 660L860 720"/>
</g>
<text x="180" y="355" font-size="95" font-weight="700" fill="#fff" opacity=".55">a</text>
</g>
<use href="#wm" x="1043" y="1315"/>

<!-- footer -->
<rect x="0" y="1300" width="1300" height="90" fill="#000"/>
<text x="50" y="1361" font-size="55" font-weight="700" fill="#fff" textLength="101" lengthAdjust="spacingAndGlyphs">alamy</text>
<text x="1133" y="1338" font-size="18" fill="#fff" textLength="117" lengthAdjust="spacingAndGlyphs">Image ID: JF6DGF</text>
<text x="1115" y="1362" font-size="18" font-weight="700" fill="#fff" textLength="135" lengthAdjust="spacingAndGlyphs">www.alamy.com</text>
</svg>
</body></html>
